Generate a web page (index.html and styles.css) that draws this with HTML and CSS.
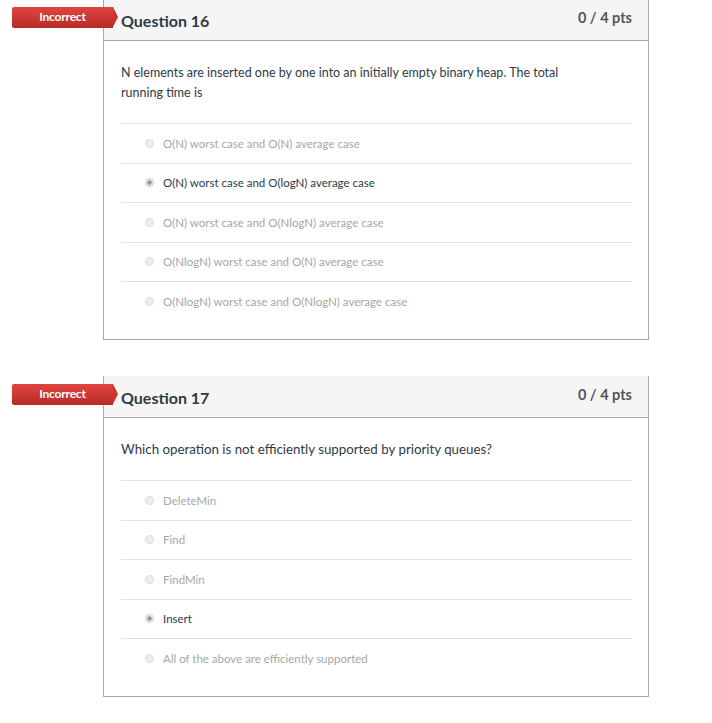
FILE: index.html
```html
<!DOCTYPE html>
<html lang="en">
<head>
    <meta charset="UTF-8">
    <meta name="viewport" content="width=device-width, initial-scale=1.0">
    <title>Quiz Results</title>
    <link rel="stylesheet" href="styles.css">
</head>
<body>
    <div class="quiz">
        <div class="question first">
            <div class="flag">Incorrect</div>
            <div class="question-header">
                <h3>Question 16</h3>
                <span class="pts">0 / 4 pts</span>
            </div>
            <div class="question-body">
                <p class="question-text">N elements are inserted one by one into an initially empty binary heap. The total running time is</p>
                <ul class="answers">
                    <li><span class="radio"></span>O(N) worst case and O(N) average case</li>
                    <li class="selected"><span class="radio"></span>O(N) worst case and O(logN) average case</li>
                    <li><span class="radio"></span>O(N) worst case and O(NlogN) average case</li>
                    <li><span class="radio"></span>O(NlogN) worst case and O(N) average case</li>
                    <li><span class="radio"></span>O(NlogN) worst case and O(NlogN) average case</li>
                </ul>
            </div>
        </div>

        <div class="question">
            <div class="flag">Incorrect</div>
            <div class="question-header">
                <h3>Question 17</h3>
                <span class="pts">0 / 4 pts</span>
            </div>
            <div class="question-body">
                <p class="question-text large">Which operation is not efficiently supported by priority queues?</p>
                <ul class="answers">
                    <li><span class="radio"></span>DeleteMin</li>
                    <li><span class="radio"></span>Find</li>
                    <li><span class="radio"></span>FindMin</li>
                    <li class="selected"><span class="radio"></span>Insert</li>
                    <li><span class="radio"></span>All of the above are efficiently supported</li>
                </ul>
            </div>
        </div>
    </div>
</body>
</html>
```

FILE: styles.css
```css
* {
    margin: 0;
    padding: 0;
    box-sizing: border-box;
}
body {
    background: #fff;
    font-family: Lato, "Open Sans", sans-serif;
    color: #2d3b45;
}
.quiz {
    width: 546px;
    margin-left: 103px;
}
.question {
    position: relative;
    border: 1px solid #aaa;
    border-top: none;
    margin-bottom: 36px;
}
.question.first {
    margin-top: -1px;
}
.question-header {
    display: flex;
    justify-content: space-between;
    height: 42px;
    padding: 0 16px 0 17px;
    background: #f5f5f5;
    border-bottom: 1px solid #aaa;
}
.question-header h3 {
    font-size: 16px;
    font-weight: 700;
    line-height: 20px;
    padding-top: 12px;
    color: #2d3b45;
}
.pts {
    font-size: 14.5px;
    font-weight: 700;
    line-height: 18px;
    padding-top: 10px;
    color: #555;
}
.flag {
    position: absolute;
    left: -92px;
    top: 8px;
    width: 101px;
    height: 21px;
    background: linear-gradient(#e0453f, #b72a27);
    border-radius: 2px 0 0 2px;
    color: #fff;
    font-size: 12px;
    font-weight: 700;
    line-height: 20px;
    text-align: center;
    letter-spacing: -0.2px;
}
.flag::after {
    content: "";
    position: absolute;
    right: -5px;
    top: 0;
    border-top: 10.5px solid transparent;
    border-bottom: 10.5px solid transparent;
    border-left: 5px solid #c93431;
}
.question-body {
    padding: 22px 16px 18px 17px;
}
.question-text {
    padding-right: 40px;
    font-size: 12.5px;
    line-height: 19.5px;
    margin-bottom: 21px;
}
.question-text.large {
    font-size: 13.3px;
}
.answers {
    list-style: none;
}
.answers li {
    display: flex;
    align-items: center;
    height: 39.5px;
    padding-left: 24px;
    border-top: 1px solid #e3e3e3;
    font-size: 11.5px;
    color: #a6a6a6;
}
.answers li.selected {
    color: #2d3b45;
}
.radio {
    width: 9px;
    height: 9px;
    margin-right: 9px;
    border-radius: 50%;
    border: 1px solid #ddd;
    background: #eee;
    flex-shrink: 0;
}
.selected .radio {
    background: radial-gradient(circle, #999 0, #999 2px, #eee 2.5px);
    border-color: #ccc;
}
```
